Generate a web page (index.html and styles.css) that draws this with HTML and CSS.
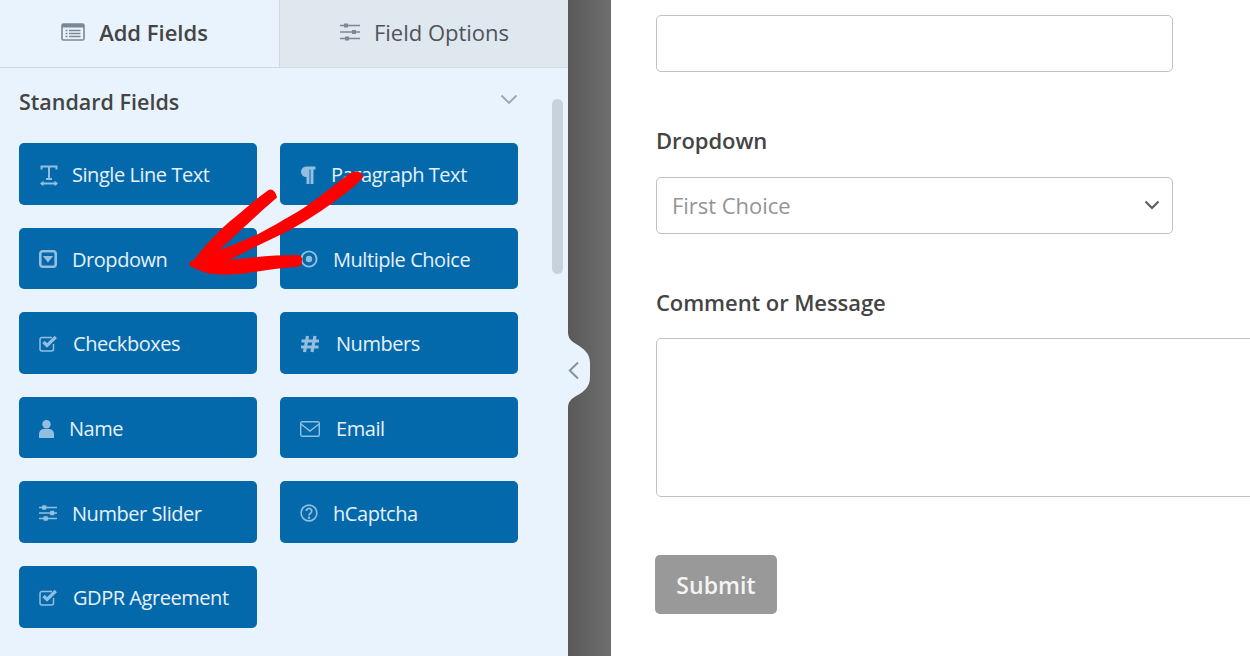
FILE: index.html
```html
<!DOCTYPE html>
<html lang="en">
<head>
  <meta charset="UTF-8" />
  <meta name="viewport" content="width=device-width, initial-scale=1.0" />
  <title>Form Builder</title>
  <link rel="stylesheet" href="styles.css">
</head>
<body>
  <div class="builder">

    <aside class="panel">
      <div class="tabs">
        <div class="tab active">
          <svg class="tab-icon" width="24" height="20" viewBox="0 0 24 20">
            <rect x="1" y="2" width="22" height="16" rx="1.5" fill="none" stroke="#7b8894" stroke-width="1.6"/>
            <rect x="1" y="2" width="22" height="3.5" fill="#7b8894"/>
            <path d="M4.5 8.500h2M8 8.500h11.500M4.500 11.500h2M8 11.500h11.500M4.500 14.500h2M8 14.500h11.500" stroke="#7b8894" stroke-width="1.4"/>
          </svg>
          <span>Add Fields</span>
        </div>
        <div class="tab">
          <svg class="tab-icon" width="22" height="20" viewBox="0 0 22 20">
            <path d="M1 3.500h20M1 10h20M1 16.500h20" stroke="#7b8894" stroke-width="1.3"/>
            <rect x="5" y="1.500" width="4" height="4" fill="#7b8894"/>
            <rect x="13" y="8" width="4" height="4" fill="#7b8894"/>
            <rect x="6" y="14.500" width="4" height="4" fill="#7b8894"/>
          </svg>
          <span>Field Options</span>
        </div>
      </div>

      <div class="group-head">
        <h2>Standard Fields</h2>
        <svg width="18" height="11" viewBox="0 0 18 11"><path d="M1.500 1.500L9 9l7.500-7.500" fill="none" stroke="#9aa7b4" stroke-width="1.8"/></svg>
      </div>

      <div class="fields">
        <button class="field">
          <svg class="ico" width="20" height="22" viewBox="0 0 20 22">
            <path d="M2.500 5.500V2.500h15v3M10 2.500v12.500M7 15h6M2 19.500h16" fill="none" stroke="#93bee0" stroke-width="2"/>
            <path d="M1 19.500l3.500-2.700v5.400zM19 19.500l-3.500-2.700v5.400z" fill="#93bee0"/>
          </svg>
          <span class="lbl gap-a">Single Line Text</span>
        </button>
        <button class="field">
          <svg class="ico" width="16" height="18" viewBox="0 0 16 18">
            <path d="M6 .5h9.500v3h-2V18h-3V3.500H9.500V18h-3v-7A5.200 5.200 0 0 1 6 .5z" fill="#93bee0"/>
          </svg>
          <span class="lbl gap-p">Paragraph Text</span>
        </button>
        <button class="field">
          <svg class="ico" width="18" height="18" viewBox="0 0 18 18">
            <rect x="1.300" y="1.300" width="15.400" height="15.400" rx="2.500" fill="none" stroke="#93bee0" stroke-width="2.600"/>
            <path d="M3.800 6h10.400L9 12.500z" fill="#93bee0"/>
          </svg>
          <span class="lbl gap-b">Dropdown</span>
        </button>
        <button class="field">
          <svg class="ico" width="18" height="18" viewBox="0 0 18 18">
            <circle cx="9" cy="9" r="7.600" fill="none" stroke="#93bee0" stroke-width="1.9"/>
            <circle cx="9" cy="9" r="3.200" fill="#93bee0"/>
          </svg>
          <span class="lbl gap-m">Multiple Choice</span>
        </button>
        <button class="field">
          <svg class="ico" width="19" height="17" viewBox="0 0 19 17">
            <path d="M14.500 9v5a2 2 0 0 1-2 2H3a2 2 0 0 1-2-2V4.500a2 2 0 0 1 2-2h10" fill="none" stroke="#93bee0" stroke-width="1.5"/>
            <path d="M4.500 7L8 10.500 16.800 2" fill="none" stroke="#93bee0" stroke-width="3.200"/>
          </svg>
          <span class="lbl gap-c">Checkboxes</span>
        </button>
        <button class="field">
          <svg class="ico" width="20" height="18" viewBox="0 0 20 18">
            <path d="M7.500 1L4.500 17M15 1l-3 16M1.500 6H19M1 12h17.500" fill="none" stroke="#93bee0" stroke-width="3.200"/>
          </svg>
          <span class="lbl gap-n">Numbers</span>
        </button>
        <button class="field">
          <svg class="ico" width="15" height="18" viewBox="0 0 15 18">
            <circle cx="7.500" cy="4.300" r="4.200" fill="#93bee0"/>
            <path d="M0 18v-4a5 5 0 0 1 5-5h5a5 5 0 0 1 5 5v4z" fill="#93bee0"/>
          </svg>
          <span class="lbl gap-u">Name</span>
        </button>
        <button class="field">
          <svg class="ico" width="20" height="16" viewBox="0 0 20 16">
            <rect x="0.700" y="0.700" width="18.600" height="14.600" rx="1.500" fill="none" stroke="#93bee0" stroke-width="1.4"/>
            <path d="M1 3l9 7 9-7" fill="none" stroke="#93bee0" stroke-width="1.4"/>
          </svg>
          <span class="lbl gap-n">Email</span>
        </button>
        <button class="field">
          <svg class="ico" width="18" height="16" viewBox="0 0 18 16">
            <path d="M0 2.500h18M0 8h18M0 13.500h18" stroke="#93bee0" stroke-width="1.6"/>
            <rect x="3" y="0.300" width="4.400" height="4.400" rx="1" fill="#93bee0"/>
            <rect x="11" y="5.800" width="4.400" height="4.400" rx="1" fill="#93bee0"/>
            <rect x="4.500" y="11.300" width="4.400" height="4.400" rx="1" fill="#93bee0"/>
          </svg>
          <span class="lbl gap-b">Number Slider</span>
        </button>
        <button class="field">
          <svg class="ico" width="18" height="18" viewBox="0 0 18 18">
            <circle cx="9" cy="9" r="7.900" fill="none" stroke="#93bee0" stroke-width="1.6"/>
            <path d="M6.300 7a2.700 2.700 0 1 1 4.200 2.300c-1 .7-1.500 1.100-1.500 2.200" fill="none" stroke="#93bee0" stroke-width="1.8"/>
            <circle cx="9" cy="13.700" r="1.200" fill="#93bee0"/>
          </svg>
          <span class="lbl gap-m">hCaptcha</span>
        </button>
        <button class="field">
          <svg class="ico" width="19" height="17" viewBox="0 0 19 17">
            <path d="M14.500 9v5a2 2 0 0 1-2 2H3a2 2 0 0 1-2-2V4.500a2 2 0 0 1 2-2h10" fill="none" stroke="#93bee0" stroke-width="1.5"/>
            <path d="M4.500 7L8 10.500 16.800 2" fill="none" stroke="#93bee0" stroke-width="3.200"/>
          </svg>
          <span class="lbl gap-c">GDPR Agreement</span>
        </button>
      </div>

      <div class="scrollbar"></div>
    </aside>

    <div class="strip"></div>

    <main class="preview">
      <div class="input-box"></div>

      <label class="form-label first">Dropdown</label>
      <div class="input-box select-box">
        <span>First Choice</span>
        <svg width="16" height="10" viewBox="0 0 16 10"><path d="M1.500 1.500L8 8l6.500-6.500" fill="none" stroke="#5f5f5f" stroke-width="2.2"/></svg>
      </div>

      <label class="form-label second">Comment or Message</label>
      <div class="textarea-box"></div>

      <button class="submit">Submit</button>
    </main>

    <!-- collapse handle on the panel edge -->
    <svg class="handle" width="24" height="76" viewBox="0 0 24 76">
      <path d="M0 0c0 6 3 9 8 12 8 5 14 9 14 19v14c0 10-6 15-14 19-5 3-8 6-8 12z" fill="#e9f3fd"/>
      <path d="M10 30.500L1.800 38.500 10 46.500" fill="none" stroke="#8193a5" stroke-width="2"/>
    </svg>

    <!-- red arrow drawn on top of the screenshot -->
    <svg class="arrow" width="200" height="130" viewBox="0 0 200 130">
      <path fill="#fe0000" d="M85.600 30C89 28 93 32 94 37.600 84 46 60 68 36.600 90 48 86 60 81 73.800 74.700 92 65 106 57 121 47.700 137 37 152 24 168.400 12.200 174 10 181 13 180 17.300 168 31 152 41 138 51 120 63 104 72 87 79.800 74 86 60 93 46.700 100 68 97 92 95 114 95 118 95 120 98 118.700 101.800 119 105 117 107 114 106.800 98 108 84 110 70.400 112 58 114 46 115 36.600 114.600 28 114 21 113 16.300 110 10 108 6 106 6 103.400 7 101 9 101 11 100 17 92 25 82 33 74.700 40 67 46 62 53.500 56 64 47 74 38 85.600 30z"/>
    </svg>
  </div>
</body>
</html>
```

FILE: styles.css
```css
* {
  box-sizing: border-box;
}

html, body {
  margin: 0;
  height: 100%;
  overflow: hidden;
}

body {
  font-family: 'Open Sans', 'Noto Sans', sans-serif;
  color: #444;
  background: #fff;
}

.builder {
  position: relative;
  display: flex;
  width: 1250px;
  height: 656px;
  overflow: hidden;
}

/* left panel */
.panel {
  position: relative;
  width: 568px;
  flex-shrink: 0;
  background: #e9f3fd;
}

.tabs {
  display: flex;
  height: 68px;
  border-bottom: 1px solid #cfd9e3;
}

.tab {
  display: flex;
  align-items: center;
  justify-content: center;
  gap: 13px;
  padding-bottom: 3px;
  width: 289px;
  font-size: 22px;
  color: #4f5459;
  background: #dfe7ef;
  border-left: 1px solid #cfd9e3;
}

.tab.active {
  width: 279px;
  padding-right: 10px;
  gap: 14px;
  background: #e9f3fd;
  border-left: 0;
  color: #444;
  font-weight: 600;
}

.group-head {
  display: flex;
  align-items: center;
  justify-content: space-between;
  padding: 16px 50px 0 19px;
  height: 50px;
}

.group-head h2 {
  margin: 0;
  font-size: 21.5px;
  font-weight: 600;
  color: #444;
}

.group-head svg {
  margin-top: -4px;
}

.fields {
  display: grid;
  grid-template-columns: 238px 238px;
  grid-auto-rows: 61.6px;
  column-gap: 23px;
  row-gap: 23px;
  padding: 25px 0 0 19px;
}

.field {
  display: flex;
  align-items: center;
  padding: 2px 0 0 20px;
  border: 0;
  border-radius: 5px;
  background: #0469ab;
  color: #e6f1fa;
  font-family: inherit;
  font-size: 20px;
  letter-spacing: -0.45px;
  text-align: left;
}

.ico {
  flex-shrink: 0;
}

.lbl.gap-a { margin-left: 13px; }
.lbl.gap-b { margin-left: 15px; }
.lbl.gap-p { margin-left: 15px; }
.lbl.gap-m { margin-left: 15px; }
.lbl.gap-c { margin-left: 15px; }
.lbl.gap-n { margin-left: 16px; }
.lbl.gap-u { margin-left: 15px; }

.scrollbar {
  position: absolute;
  top: 99px;
  left: 552px;
  width: 11px;
  height: 175px;
  border-radius: 6px;
  background: #c8d2dc;
}

/* dark strip between panel and preview */
.strip {
  width: 43px;
  flex-shrink: 0;
  background: linear-gradient(90deg, #595959, #6e6e6e);
}

/* form preview */
.preview {
  flex: 1;
  min-width: 0;
  padding: 15px 0 0 45px;
}

.input-box {
  width: 517px;
  height: 57px;
  border: 1px solid #c2c2c2;
  border-radius: 5px;
  background: #fff;
}

.form-label {
  display: block;
  font-size: 22px;
  font-weight: 600;
  letter-spacing: -0.08px;
  line-height: 30px;
  color: #444;
}

.form-label.first {
  margin-top: 53px;
  margin-bottom: 22px;
}

.form-label.second {
  margin-top: 53px;
  margin-bottom: 21px;
}

.select-box {
  display: flex;
  align-items: center;
  justify-content: space-between;
  padding: 0 12px 2px 15px;
  font-size: 22px;
  letter-spacing: -0.03px;
  color: #949494;
}

.textarea-box {
  width: 640px;
  height: 159px;
  border: 1px solid #c2c2c2;
  border-radius: 5px;
}

.submit {
  display: block;
  margin: 58px 0 0 -1px;
  width: 122px;
  height: 59px;
  border: 0;
  border-radius: 5px;
  background: #999;
  color: #f4f4f4;
  font-family: inherit;
  font-size: 23px;
  font-weight: 600;
  letter-spacing: 0.1px;
}

/* overlays */
.handle {
  position: absolute;
  top: 332px;
  left: 568px;
}

.arrow {
  position: absolute;
  top: 160px;
  left: 183px;
  pointer-events: none;
}
```
